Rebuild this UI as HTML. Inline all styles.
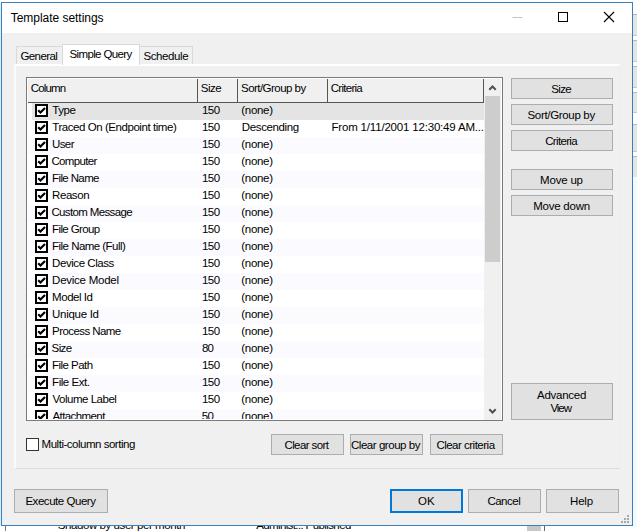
<!DOCTYPE html>
<html lang="en"><head><meta charset="utf-8"><title>Template settings</title>
<style>
html,body{margin:0;padding:0;}
body{width:637px;height:531px;overflow:hidden;position:relative;background:#fff;font-family:"Liberation Sans",sans-serif;font-size:11px;color:#000;}
.abs{position:absolute;}
.t{position:absolute;white-space:nowrap;line-height:13px;font-size:11px;}
#bg{position:absolute;left:0;top:0;width:637px;height:531px;background:#fff;overflow:hidden;}
#win{position:absolute;left:1px;top:2px;width:630px;height:522px;border:1px solid #3a7fc0;background:#f0f0f0;}
#titlebar{position:absolute;left:2px;top:3px;width:630px;height:30px;background:#fff;}
.btn{position:absolute;box-sizing:border-box;background:#e1e1e1;border:1px solid #adadad;}
.tab{position:absolute;box-sizing:border-box;background:#f0f0f0;border:1px solid #d9d9d9;border-bottom:none;}
.tab.sel{background:#fff;}
#pane{position:absolute;box-sizing:border-box;left:14px;top:64px;width:606px;height:405px;border:1px solid #dcdcdc;border-top:2px solid #fff;border-left:2px solid #fbfbfb;border-right-color:#eeeeee;background:#f0f0f0;}
#list{position:absolute;box-sizing:border-box;left:26px;top:77px;width:477px;height:344px;border:1px solid #7a7a7a;background:#fff;}
#hdr{position:absolute;left:28px;top:79px;width:456px;height:23px;background:#f0f0f0;border-bottom:1px solid #555;}
.sep{position:absolute;top:79px;width:1px;height:23px;background:#555;}
#rows{position:absolute;left:28px;top:103px;width:456px;height:316px;overflow:hidden;}
.rowbg{position:absolute;left:0;width:456px;height:17px;}
.hl{position:absolute;left:4px;width:452px;height:17px;background:#e4e4e4;}
.cb{position:absolute;left:7px;width:9px;height:9px;border:2px solid #000;background:#fff;}
.cb svg{position:absolute;left:-2px;top:-2px;}
#sb{position:absolute;left:484px;top:79px;width:17px;height:341px;background:#f0f0f0;}
#thumb{position:absolute;left:485px;top:96px;width:15px;height:166px;background:#cdcdcd;}
</style></head>
<body>
<div id="bg">
<div class="abs" style="left:0;top:3px;width:1px;height:522px;background:#d4f1fb"></div>
<div class="abs" style="left:5px;top:525px;width:1px;height:6px;background:#777"></div>
<span id="g1" class="t" style="left:57.80px;top:519px;letter-spacing:-0.429px;font-size:11.5px;">Shadow by user per month</span><span id="g2" class="t" style="left:256.18px;top:519px;letter-spacing:-0.618px;font-size:11.5px;">Administ...</span><span id="g3" class="t" style="left:305.60px;top:519px;letter-spacing:-0.598px;font-size:11.5px;">Published</span>
<div class="abs" style="left:0;top:525px;width:527px;height:6px;background:transparent"></div>
<div class="abs" style="left:527px;top:525px;width:14px;height:6px;background:#c8c8c8"></div>
<div class="abs" style="left:544px;top:525px;width:1px;height:6px;background:#666"></div>
<div class="abs" style="left:633px;top:14px;width:4px;height:20px;background:#e6e4e3;border-top:1px solid #a9bccb;border-bottom:1px solid #c2cbd2"></div>
<div class="abs" style="left:633px;top:40px;width:4px;height:20px;background:#e6e4e3;border-top:1px solid #a9bccb;border-bottom:1px solid #c2cbd2"></div>
<div class="abs" style="left:633px;top:66px;width:4px;height:20px;background:#e6e4e3;border-top:1px solid #a9bccb;border-bottom:1px solid #c2cbd2"></div>
<div class="abs" style="left:633px;top:92px;width:4px;height:19px;background:#e6e4e3;border-top:1px solid #a9bccb;border-bottom:1px solid #c2cbd2"></div>
<div class="abs" style="left:633px;top:124px;width:4px;height:26px;background:#e6e4e3;border-top:1px solid #a9bccb;border-bottom:1px solid #c2cbd2"></div>
<div class="abs" style="left:633px;top:156px;width:4px;height:20px;background:#e6e4e3;border-top:1px solid #a9bccb;border-bottom:1px solid #c2cbd2"></div>
<div class="abs" style="left:633px;top:177px;width:4px;height:350px;background:#f4fbff"></div>
</div>
<div id="win"></div>
<div id="titlebar"></div>
<span id="title" class="t" style="left:10.78px;top:12px;letter-spacing:-0.039px;font-size:12px;">Template settings</span>
<svg class="abs" style="left:502px;top:3px" width="130" height="30" viewBox="0 0 130 30">
<path d="M10.5 14.5 H20.5" stroke="#c4c4c4" stroke-width="1" fill="none"/>
<rect x="56.5" y="9.5" width="9" height="9" stroke="#000" stroke-width="1" fill="none"/>
<path d="M102 9 L112 19 M112 9 L102 19" stroke="#000" stroke-width="1.1" fill="none"/>
</svg>
<div id="pane"></div>
<div class="tab" style="left:16px;top:46px;width:47px;height:18px;"></div>
<div class="tab" style="left:139px;top:46px;width:54px;height:18px;"></div>
<div class="tab sel" style="left:62px;top:44px;width:78px;height:21px;"></div>
<span id="tGen" class="t" style="left:20.48px;top:50px;letter-spacing:-0.599px;font-size:11.5px;">General</span><span id="tSim" class="t" style="left:69.60px;top:48px;letter-spacing:-0.645px;font-size:11.5px;">Simple Query</span><span id="tSch" class="t" style="left:143.40px;top:50px;letter-spacing:-0.383px;font-size:11.5px;">Schedule</span>
<div id="list"></div>
<div id="hdr"></div>
<div class="sep" style="left:197px"></div>
<div class="sep" style="left:237px"></div>
<div class="sep" style="left:327px"></div>
<div class="sep" style="left:483px"></div>
<span id="hCol" class="t" style="left:30.78px;top:82px;letter-spacing:-0.825px;font-size:11.5px;">Column</span><span id="hSize" class="t" style="left:200.80px;top:82px;letter-spacing:-0.507px;font-size:11.5px;">Size</span><span id="hSort" class="t" style="left:241.00px;top:82px;letter-spacing:-0.533px;font-size:11.5px;">Sort/Group by</span><span id="hCrit" class="t" style="left:330.78px;top:82px;letter-spacing:-0.727px;font-size:11.5px;">Criteria</span>
<div id="rows">
<div class="rowbg" style="top:0px;background:#fafaff"></div><div class="hl" style="top:0px"></div><div class="cb" style="top:1px"><svg viewBox="0 0 13 13" width="13" height="13"><path d="M3.2 6.2 L5.5 8.5 L10 3.9" fill="none" stroke="#000" stroke-width="2.2"/></svg></div><span id="r0a" class="t" style="left:24.26px;top:1px;letter-spacing:-0.436px;font-size:11.5px;">Type</span><span id="r0b" class="t" style="left:173.90px;top:1px;letter-spacing:-0.468px;font-size:11.5px;">150</span><span id="r0c" class="t" style="left:213.27px;top:1px;letter-spacing:-0.299px;font-size:11.5px;">(none)</span>
<div class="rowbg" style="top:17px;background:#fff"></div><div class="cb" style="top:18px"><svg viewBox="0 0 13 13" width="13" height="13"><path d="M3.2 6.2 L5.5 8.5 L10 3.9" fill="none" stroke="#000" stroke-width="2.2"/></svg></div><span id="r1a" class="t" style="left:24.26px;top:18px;letter-spacing:-0.442px;font-size:11.5px;">Traced On (Endpoint time)</span><span id="r1b" class="t" style="left:173.90px;top:18px;letter-spacing:-0.468px;font-size:11.5px;">150</span><span id="r1c" class="t" style="left:213.80px;top:18px;letter-spacing:-0.373px;font-size:11.5px;">Descending</span><span id="r1d" class="t" style="left:303.50px;top:18px;letter-spacing:-0.185px;font-size:11.5px;">From 1/11/2001 12:30:49 AM...</span>
<div class="rowbg" style="top:34px;background:#fafaff"></div><div class="cb" style="top:35px"><svg viewBox="0 0 13 13" width="13" height="13"><path d="M3.2 6.2 L5.5 8.5 L10 3.9" fill="none" stroke="#000" stroke-width="2.2"/></svg></div><span id="r2a" class="t" style="left:24.10px;top:35px;letter-spacing:-0.639px;font-size:11.5px;">User</span><span id="r2b" class="t" style="left:173.90px;top:35px;letter-spacing:-0.468px;font-size:11.5px;">150</span><span id="r2c" class="t" style="left:213.27px;top:35px;letter-spacing:-0.299px;font-size:11.5px;">(none)</span>
<div class="rowbg" style="top:51px;background:#fff"></div><div class="cb" style="top:52px"><svg viewBox="0 0 13 13" width="13" height="13"><path d="M3.2 6.2 L5.5 8.5 L10 3.9" fill="none" stroke="#000" stroke-width="2.2"/></svg></div><span id="r3a" class="t" style="left:23.38px;top:52px;letter-spacing:-0.636px;font-size:11.5px;">Computer</span><span id="r3b" class="t" style="left:173.90px;top:52px;letter-spacing:-0.468px;font-size:11.5px;">150</span><span id="r3c" class="t" style="left:213.27px;top:52px;letter-spacing:-0.299px;font-size:11.5px;">(none)</span>
<div class="rowbg" style="top:68px;background:#fafaff"></div><div class="cb" style="top:69px"><svg viewBox="0 0 13 13" width="13" height="13"><path d="M3.2 6.2 L5.5 8.5 L10 3.9" fill="none" stroke="#000" stroke-width="2.2"/></svg></div><span id="r4a" class="t" style="left:24.10px;top:69px;letter-spacing:-0.626px;font-size:11.5px;">File Name</span><span id="r4b" class="t" style="left:173.90px;top:69px;letter-spacing:-0.468px;font-size:11.5px;">150</span><span id="r4c" class="t" style="left:213.27px;top:69px;letter-spacing:-0.299px;font-size:11.5px;">(none)</span>
<div class="rowbg" style="top:85px;background:#fff"></div><div class="cb" style="top:86px"><svg viewBox="0 0 13 13" width="13" height="13"><path d="M3.2 6.2 L5.5 8.5 L10 3.9" fill="none" stroke="#000" stroke-width="2.2"/></svg></div><span id="r5a" class="t" style="left:24.10px;top:86px;letter-spacing:-0.441px;font-size:11.5px;">Reason</span><span id="r5b" class="t" style="left:173.90px;top:86px;letter-spacing:-0.468px;font-size:11.5px;">150</span><span id="r5c" class="t" style="left:213.27px;top:86px;letter-spacing:-0.299px;font-size:11.5px;">(none)</span>
<div class="rowbg" style="top:102px;background:#fafaff"></div><div class="cb" style="top:103px"><svg viewBox="0 0 13 13" width="13" height="13"><path d="M3.2 6.2 L5.5 8.5 L10 3.9" fill="none" stroke="#000" stroke-width="2.2"/></svg></div><span id="r6a" class="t" style="left:23.38px;top:103px;letter-spacing:-0.636px;font-size:11.5px;">Custom Message</span><span id="r6b" class="t" style="left:173.90px;top:103px;letter-spacing:-0.468px;font-size:11.5px;">150</span><span id="r6c" class="t" style="left:213.27px;top:103px;letter-spacing:-0.299px;font-size:11.5px;">(none)</span>
<div class="rowbg" style="top:119px;background:#fff"></div><div class="cb" style="top:120px"><svg viewBox="0 0 13 13" width="13" height="13"><path d="M3.2 6.2 L5.5 8.5 L10 3.9" fill="none" stroke="#000" stroke-width="2.2"/></svg></div><span id="r7a" class="t" style="left:24.10px;top:120px;letter-spacing:-0.623px;font-size:11.5px;">File Group</span><span id="r7b" class="t" style="left:173.90px;top:120px;letter-spacing:-0.468px;font-size:11.5px;">150</span><span id="r7c" class="t" style="left:213.27px;top:120px;letter-spacing:-0.299px;font-size:11.5px;">(none)</span>
<div class="rowbg" style="top:136px;background:#fafaff"></div><div class="cb" style="top:137px"><svg viewBox="0 0 13 13" width="13" height="13"><path d="M3.2 6.2 L5.5 8.5 L10 3.9" fill="none" stroke="#000" stroke-width="2.2"/></svg></div><span id="r8a" class="t" style="left:24.10px;top:137px;letter-spacing:-0.538px;font-size:11.5px;">File Name (Full)</span><span id="r8b" class="t" style="left:173.90px;top:137px;letter-spacing:-0.468px;font-size:11.5px;">150</span><span id="r8c" class="t" style="left:213.27px;top:137px;letter-spacing:-0.299px;font-size:11.5px;">(none)</span>
<div class="rowbg" style="top:153px;background:#fff"></div><div class="cb" style="top:154px"><svg viewBox="0 0 13 13" width="13" height="13"><path d="M3.2 6.2 L5.5 8.5 L10 3.9" fill="none" stroke="#000" stroke-width="2.2"/></svg></div><span id="r9a" class="t" style="left:24.10px;top:154px;letter-spacing:-0.440px;font-size:11.5px;">Device Class</span><span id="r9b" class="t" style="left:173.90px;top:154px;letter-spacing:-0.468px;font-size:11.5px;">150</span><span id="r9c" class="t" style="left:213.27px;top:154px;letter-spacing:-0.299px;font-size:11.5px;">(none)</span>
<div class="rowbg" style="top:170px;background:#fafaff"></div><div class="cb" style="top:171px"><svg viewBox="0 0 13 13" width="13" height="13"><path d="M3.2 6.2 L5.5 8.5 L10 3.9" fill="none" stroke="#000" stroke-width="2.2"/></svg></div><span id="r10a" class="t" style="left:24.10px;top:171px;letter-spacing:-0.249px;font-size:11.5px;">Device Model</span><span id="r10b" class="t" style="left:173.90px;top:171px;letter-spacing:-0.468px;font-size:11.5px;">150</span><span id="r10c" class="t" style="left:213.27px;top:171px;letter-spacing:-0.299px;font-size:11.5px;">(none)</span>
<div class="rowbg" style="top:187px;background:#fff"></div><div class="cb" style="top:188px"><svg viewBox="0 0 13 13" width="13" height="13"><path d="M3.2 6.2 L5.5 8.5 L10 3.9" fill="none" stroke="#000" stroke-width="2.2"/></svg></div><span id="r11a" class="t" style="left:24.10px;top:188px;letter-spacing:-0.468px;font-size:11.5px;">Model Id</span><span id="r11b" class="t" style="left:173.90px;top:188px;letter-spacing:-0.468px;font-size:11.5px;">150</span><span id="r11c" class="t" style="left:213.27px;top:188px;letter-spacing:-0.299px;font-size:11.5px;">(none)</span>
<div class="rowbg" style="top:204px;background:#fafaff"></div><div class="cb" style="top:205px"><svg viewBox="0 0 13 13" width="13" height="13"><path d="M3.2 6.2 L5.5 8.5 L10 3.9" fill="none" stroke="#000" stroke-width="2.2"/></svg></div><span id="r12a" class="t" style="left:24.10px;top:205px;letter-spacing:-0.300px;font-size:11.5px;">Unique Id</span><span id="r12b" class="t" style="left:173.90px;top:205px;letter-spacing:-0.468px;font-size:11.5px;">150</span><span id="r12c" class="t" style="left:213.27px;top:205px;letter-spacing:-0.299px;font-size:11.5px;">(none)</span>
<div class="rowbg" style="top:221px;background:#fff"></div><div class="cb" style="top:222px"><svg viewBox="0 0 13 13" width="13" height="13"><path d="M3.2 6.2 L5.5 8.5 L10 3.9" fill="none" stroke="#000" stroke-width="2.2"/></svg></div><span id="r13a" class="t" style="left:24.10px;top:222px;letter-spacing:-0.572px;font-size:11.5px;">Process Name</span><span id="r13b" class="t" style="left:173.90px;top:222px;letter-spacing:-0.468px;font-size:11.5px;">150</span><span id="r13c" class="t" style="left:213.27px;top:222px;letter-spacing:-0.299px;font-size:11.5px;">(none)</span>
<div class="rowbg" style="top:238px;background:#fafaff"></div><div class="cb" style="top:239px"><svg viewBox="0 0 13 13" width="13" height="13"><path d="M3.2 6.2 L5.5 8.5 L10 3.9" fill="none" stroke="#000" stroke-width="2.2"/></svg></div><span id="r14a" class="t" style="left:23.60px;top:239px;letter-spacing:-0.613px;font-size:11.5px;">Size</span><span id="r14b" class="t" style="left:173.95px;top:239px;letter-spacing:-0.770px;font-size:11.5px;">80</span><span id="r14c" class="t" style="left:213.27px;top:239px;letter-spacing:-0.299px;font-size:11.5px;">(none)</span>
<div class="rowbg" style="top:255px;background:#fff"></div><div class="cb" style="top:256px"><svg viewBox="0 0 13 13" width="13" height="13"><path d="M3.2 6.2 L5.5 8.5 L10 3.9" fill="none" stroke="#000" stroke-width="2.2"/></svg></div><span id="r15a" class="t" style="left:24.10px;top:256px;letter-spacing:-0.545px;font-size:11.5px;">File Path</span><span id="r15b" class="t" style="left:173.90px;top:256px;letter-spacing:-0.468px;font-size:11.5px;">150</span><span id="r15c" class="t" style="left:213.27px;top:256px;letter-spacing:-0.299px;font-size:11.5px;">(none)</span>
<div class="rowbg" style="top:272px;background:#fafaff"></div><div class="cb" style="top:273px"><svg viewBox="0 0 13 13" width="13" height="13"><path d="M3.2 6.2 L5.5 8.5 L10 3.9" fill="none" stroke="#000" stroke-width="2.2"/></svg></div><span id="r16a" class="t" style="left:24.10px;top:273px;letter-spacing:-0.463px;font-size:11.5px;">File Ext.</span><span id="r16b" class="t" style="left:173.90px;top:273px;letter-spacing:-0.468px;font-size:11.5px;">150</span><span id="r16c" class="t" style="left:213.27px;top:273px;letter-spacing:-0.299px;font-size:11.5px;">(none)</span>
<div class="rowbg" style="top:289px;background:#fff"></div><div class="cb" style="top:290px"><svg viewBox="0 0 13 13" width="13" height="13"><path d="M3.2 6.2 L5.5 8.5 L10 3.9" fill="none" stroke="#000" stroke-width="2.2"/></svg></div><span id="r17a" class="t" style="left:24.45px;top:290px;letter-spacing:-0.478px;font-size:11.5px;">Volume Label</span><span id="r17b" class="t" style="left:173.90px;top:290px;letter-spacing:-0.468px;font-size:11.5px;">150</span><span id="r17c" class="t" style="left:213.27px;top:290px;letter-spacing:-0.299px;font-size:11.5px;">(none)</span>
<div class="rowbg" style="top:306px;background:#fafaff"></div><div class="cb" style="top:307px"><svg viewBox="0 0 13 13" width="13" height="13"><path d="M3.2 6.2 L5.5 8.5 L10 3.9" fill="none" stroke="#000" stroke-width="2.2"/></svg></div><span id="r18a" class="t" style="left:24.48px;top:307px;letter-spacing:-0.589px;font-size:11.5px;">Attachment</span><span id="r18b" class="t" style="left:173.80px;top:307px;letter-spacing:-0.656px;font-size:11.5px;">50</span><span id="r18c" class="t" style="left:213.27px;top:307px;letter-spacing:-0.299px;font-size:11.5px;">(none)</span>
</div>
<div id="sb"></div><div id="thumb"></div>
<svg class="abs" style="left:484px;top:80px" width="17" height="17" viewBox="0 0 17 17"><path d="M5.3 9.7 L8.5 6.5 L11.7 9.7" stroke="#505050" stroke-width="2" fill="none"/></svg>
<svg class="abs" style="left:484px;top:402px" width="17" height="17" viewBox="0 0 17 17"><path d="M5.3 7.3 L8.5 10.5 L11.7 7.3" stroke="#505050" stroke-width="2" fill="none"/></svg>
<div class="btn" style="left:511px;top:78px;width:102px;height:21px;"></div>
<div class="btn" style="left:511px;top:104px;width:102px;height:21px;"></div>
<div class="btn" style="left:511px;top:130px;width:102px;height:21px;"></div>
<div class="btn" style="left:511px;top:169px;width:102px;height:21px;"></div>
<div class="btn" style="left:511px;top:195px;width:102px;height:21px;"></div>
<div class="btn" style="left:511px;top:383px;width:102px;height:37px;"></div>
<span id="bSize" class="t" style="left:551.30px;top:83px;letter-spacing:-0.687px;font-size:11.5px;">Size</span><span id="bSort" class="t" style="left:527.50px;top:109px;letter-spacing:-0.325px;font-size:11.5px;">Sort/Group by</span><span id="bCrit" class="t" style="left:545.18px;top:135px;letter-spacing:-0.658px;font-size:11.5px;">Criteria</span><span id="bUp" class="t" style="left:540.10px;top:174px;letter-spacing:-0.202px;font-size:11.5px;">Move up</span><span id="bDown" class="t" style="left:533.20px;top:200px;letter-spacing:-0.228px;font-size:11.5px;">Move down</span><span id="bAdv" class="t" style="left:537.08px;top:388.5px;letter-spacing:-0.272px;font-size:11.5px;">Advanced</span><span id="bView" class="t" style="left:550.45px;top:401.5px;letter-spacing:-1.071px;font-size:11.5px;">View</span>
<div class="abs" style="left:26px;top:438px;width:11px;height:11px;border:1px solid #333;background:#fff"></div>
<span id="multi" class="t" style="left:41.60px;top:438px;letter-spacing:-0.484px;font-size:11.5px;">Multi-column sorting</span>
<div class="btn" style="left:271px;top:434px;width:73px;height:21px;"></div>
<div class="btn" style="left:350px;top:434px;width:73px;height:21px;"></div>
<div class="btn" style="left:430px;top:434px;width:73px;height:21px;"></div>
<span id="bCs" class="t" style="left:284.48px;top:439px;letter-spacing:-0.608px;font-size:11.5px;">Clear sort</span><span id="bCg" class="t" style="left:350.98px;top:439px;letter-spacing:-0.457px;font-size:11.5px;">Clear group by</span><span id="bCc" class="t" style="left:436.38px;top:439px;letter-spacing:-0.502px;font-size:11.5px;">Clear criteria</span>
<div class="btn" style="left:14px;top:489px;width:94px;height:24px;"></div>
<div class="btn" style="left:390px;top:489px;width:73px;height:24px;border:2px solid #0078d7;"></div>
<div class="btn" style="left:468px;top:489px;width:73px;height:24px;"></div>
<div class="btn" style="left:546px;top:489px;width:73px;height:24px;"></div>
<span id="bEx" class="t" style="left:25.40px;top:495px;letter-spacing:-0.455px;font-size:11.5px;">Execute Query</span><span id="bOK" class="t" style="left:418.01px;top:495px;font-size:11.5px;">OK</span><span id="bCan" class="t" style="left:487.38px;top:495px;letter-spacing:-0.483px;font-size:11.5px;">Cancel</span><span id="bHelp" class="t" style="left:570.10px;top:495px;letter-spacing:-0.212px;font-size:11.5px;">Help</span>
<svg class="abs" style="left:621px;top:515px" width="9" height="9" viewBox="0 0 9 9" fill="#a8a8a8">
<rect x="6" y="0" width="2" height="2"/><rect x="3" y="3" width="2" height="2"/><rect x="6" y="3" width="2" height="2"/>
<rect x="0" y="6" width="2" height="2"/><rect x="3" y="6" width="2" height="2"/><rect x="6" y="6" width="2" height="2"/>
</svg>
</body></html>
